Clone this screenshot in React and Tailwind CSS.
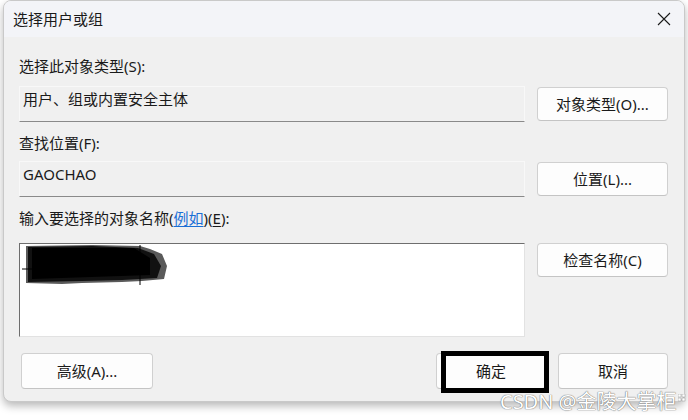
import React from "react";

const font = { fontFamily: '"Noto Sans", "Noto Sans CJK SC", sans-serif' };

function Btn({ children, className = "" }) {
  return (
    <div
      className={
        "flex items-center justify-center h-[34px] rounded-[4px] border border-[#d0d0d0] border-b-[#c4c4c4] bg-[#fdfdfd] text-[15px] text-[#1a1a1a] " +
        className
      }
    >
      {children}
    </div>
  );
}

export default function App() {
  return (
    <div
      className="relative w-[688px] h-[420px] overflow-hidden bg-white"
      style={font}
    >
      <div className="ml-[3px] w-[682px] h-[402px] rounded-[8px] border border-[#c9c9c9] bg-[#f0f0f0] overflow-hidden shadow-[0_4px_8px_rgba(0,0,0,0.28)]">
        {/* title bar */}
        <div className="h-[36px] bg-[#f3f4f8] flex items-center justify-between pl-[9px] pr-[13px]">
          <span className="text-[15px] text-[#1a1a1a] leading-[20px] mt-[-1px]">
            选择用户或组
          </span>
          <svg width="14" height="14" viewBox="0 0 14 14" className="mt-[-1px]">
            <path d="M1 1 L13 13 M13 1 L1 13" stroke="#1a1a1a" strokeWidth="1.1" />
          </svg>
        </div>

        <div className="pl-[15px] pr-[16px] pt-[19px]">
          <div className="text-[15px] leading-[20px] text-[#1a1a1a]">
            选择此对象类型(S):
          </div>
          <div className="mt-[10px] flex items-center gap-[12px]">
            <div className="w-[506px] h-[36px] border border-[#f8f8f8] border-b-[#8a8a8a] bg-[#f0f0f0] pl-[3px] pt-[2px] text-[15px] leading-[20px] text-[#1a1a1a]">
              用户、组或内置安全主体
            </div>
            <Btn className="w-[131px]">对象类型(O)...</Btn>
          </div>

          <div className="mt-[11px] text-[15px] leading-[20px] text-[#1a1a1a]">
            查找位置(F):
          </div>
          <div className="mt-[8px] flex items-center gap-[12px]">
            <div className="w-[506px] h-[36px] border border-[#f8f8f8] border-b-[#8a8a8a] bg-[#f0f0f0] pl-[3px] pt-[2px] text-[15px] leading-[20px] text-[#1a1a1a]">
              GAOCHAO
            </div>
            <Btn className="w-[131px]">位置(L)...</Btn>
          </div>

          <div className="mt-[11px] text-[15px] leading-[20px] text-[#1a1a1a]">
            输入要选择的对象名称(
            <span className="text-[#1a6fd6] underline underline-offset-2">例如</span>
            )(<span className="underline underline-offset-2">E</span>):
          </div>
          <div className="mt-[15px] flex items-start gap-[12px]">
            <div className="relative w-[506px] h-[94px] bg-white border border-[#6e6e6e] border-r-[#e2e2e2] border-b-[#e2e2e2]">
              <svg
                width="150"
                height="44"
                viewBox="0 0 150 44"
                className="absolute left-[2px] top-[0px]"
              >
                <path d="M4 2 L70 1 L118 2 L128 5 L140 10 L145 22 L142 35 L120 37 L100 38 L60 39 L40 40 L4 39 Z" fill="#5a5a5a" />
                <path d="M6 3 L70 2 L116 4 L132 10 L139 22 L135 34 L100 36 L60 37 L6 38 Z" fill="#111" />
                <path d="M10 4 L112 4 L128 14 L128 31 L10 35 Z" fill="#000" />
                <path d="M118 1 L118 41" stroke="#000" strokeWidth="1" />
                <path d="M0 25 L10 25" stroke="#000" strokeWidth="1" />
              </svg>
            </div>
            <Btn className="w-[131px]">检查名称(C)</Btn>
          </div>

          <div className="mt-[16px] flex items-center">
            <Btn className="ml-[2px] w-[132px] h-[36px]">高级(A)...</Btn>
            <div className="ml-auto relative">
              <Btn className="w-[110px] h-[36px]">确定</Btn>
              <div className="absolute left-[5px] top-[-2px] w-[108px] h-[42px] border-[5px] border-black"></div>
            </div>
            <Btn className="ml-[12px] w-[110px] h-[36px]">取消</Btn>
          </div>
        </div>
      </div>

      <div className="absolute left-[500px] top-[389px] flex items-center text-[20px] leading-[26px] text-white [text-shadow:0_0_1px_#6b6b6b,0_0_1px_#6b6b6b]">
        <span>CSDN @金陵大掌柜</span>
        <svg width="10" height="10" viewBox="0 0 10 10" className="ml-[1px] mt-[-6px]">
          <rect x="0" y="0" width="3" height="3" fill="#fff" stroke="#999" strokeWidth="0.5" />
          <rect x="4" y="0" width="3" height="3" fill="#fff" stroke="#999" strokeWidth="0.5" />
          <rect x="0" y="4" width="3" height="3" fill="#fff" stroke="#999" strokeWidth="0.5" />
          <rect x="4" y="4" width="3" height="3" fill="#fff" stroke="#999" strokeWidth="0.5" />
        </svg>
      </div>
    </div>
  );
}
